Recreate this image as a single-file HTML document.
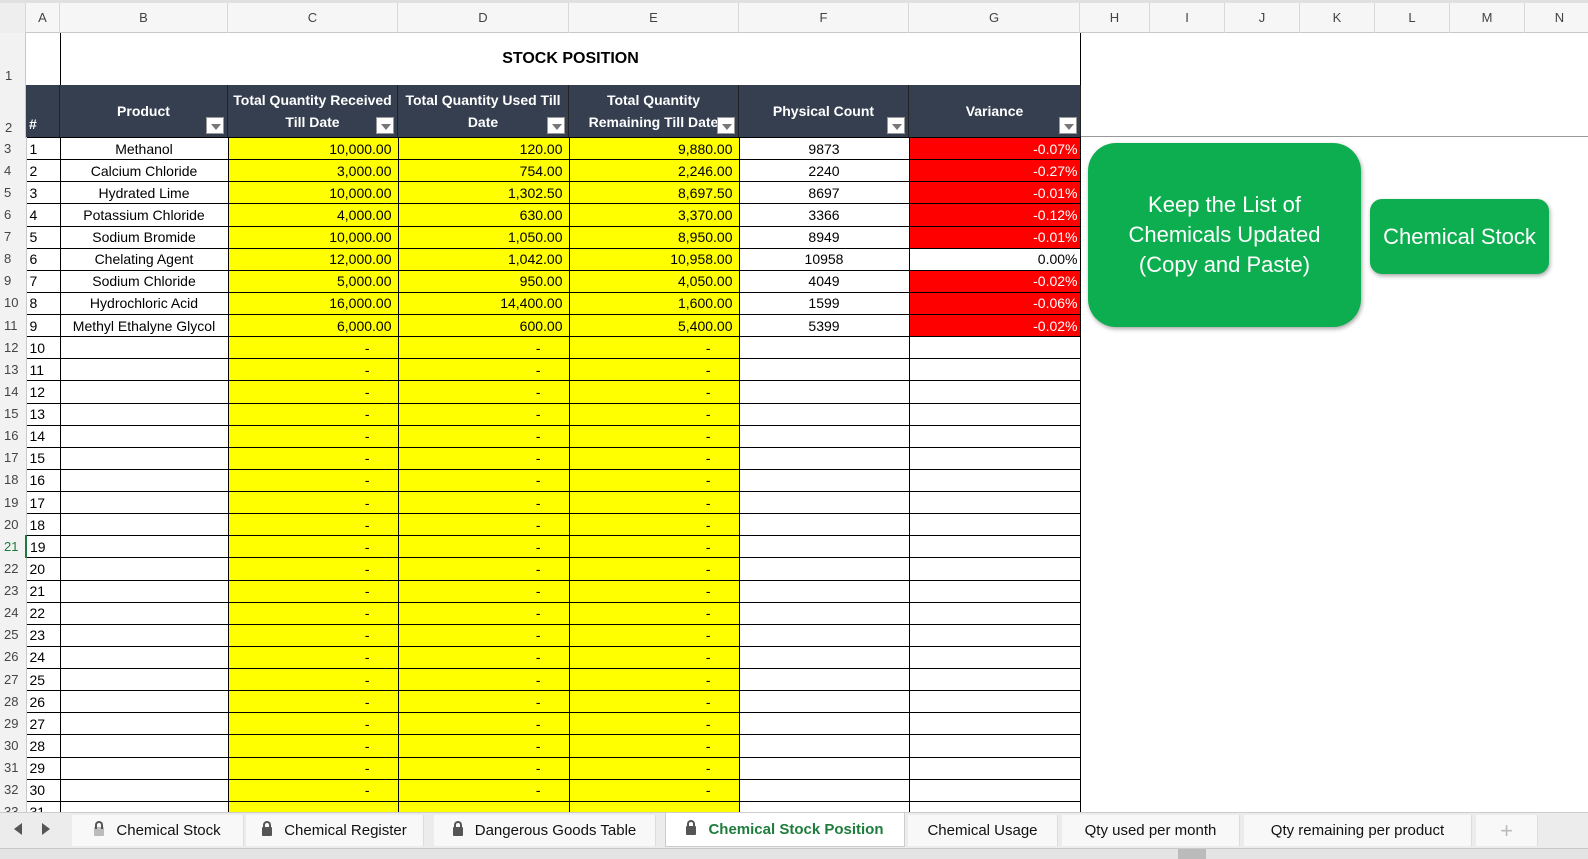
<!DOCTYPE html>
<html><head><meta charset="utf-8"><style>
*{margin:0;padding:0;box-sizing:border-box}
body{width:1588px;height:859px;overflow:hidden;background:#fff;font-family:"Liberation Sans",sans-serif;position:relative;color:#000}
.ch{position:absolute;top:0;height:33px;background:#f6f6f6;border-bottom:1px solid #c8c8c8;border-top:3px solid #e0e0e0}
.ch div{position:absolute;top:0;height:30px;line-height:30px;text-align:center;font-size:13px;color:#444;border-right:1px solid #d8d8d8}
.rn{position:absolute;left:0;top:33px;width:26px;height:780px;background:#f2f2f2;border-right:1px solid #c8c8c8}
table{position:absolute;left:0;top:137px;border-collapse:collapse;table-layout:fixed;font-size:14px}
td{height:22.14px;border:1px solid #000;padding:0 6px;white-space:nowrap;overflow:hidden;line-height:20px}
td.n{border:none;color:#444;font-size:13px;padding:0 0 0 4px;background:#f2f2f2;border-right:1px solid #c8c8c8}
td.a{border-left:1px solid #000;padding-left:3px}
.y{background:#ff0;text-align:right}
.d{background:#ff0;text-align:right;padding-right:28px}
.c{text-align:center}
.r{background:#f00;color:#fff;text-align:right;padding-right:2px}
.w{text-align:right;padding-right:2px}
.hd{position:absolute;top:85px;height:52px;background:#353f4f;color:#fff;font-weight:bold;font-size:14px;text-align:center;border-right:1px solid #222;display:flex;align-items:center;justify-content:center;line-height:22px}
.fb{position:absolute;right:3px;bottom:3px;width:18px;height:17px;background:#fff;border:1px solid #999}
.fb:after{content:"";position:absolute;left:4px;top:6px;border-left:5px solid transparent;border-right:5px solid transparent;border-top:6px solid #777}
.btn{position:absolute;background:#0dae4f;color:#fff;text-align:center;box-shadow:1px 2px 4px rgba(0,0,0,.35);font-size:22px;display:flex;align-items:center;justify-content:center}
.tabs{position:absolute;left:0;top:812px;width:1588px;height:36px;background:#ececec;border-top:1px solid #ccc}
.tab{position:absolute;top:2px;height:31px;line-height:31px;background:#f8f8f8;font-size:15px;text-align:center;color:#111;border-right:1px solid #ddd}
.lk{display:inline-block;width:10px;height:9px;background:#555;border-radius:1px;position:relative;margin-right:12px;vertical-align:-1px}
.lk:before{content:"";position:absolute;left:1px;top:-6px;width:4px;height:6px;border:2px solid #555;border-bottom:none;border-radius:4px 4px 0 0}
</style></head><body>
<div class="ch" style="left:0;width:1588px">
<div style="left:0;width:26px;background:#eee"></div>
<div style="left:26px;width:34px">A</div><div style="left:60px;width:168px">B</div><div style="left:228px;width:170px">C</div><div style="left:398px;width:171px">D</div><div style="left:569px;width:170px">E</div><div style="left:739px;width:170px">F</div><div style="left:909px;width:171px">G</div><div style="left:1080px;width:70px">H</div><div style="left:1150px;width:75px">I</div><div style="left:1225px;width:75px">J</div><div style="left:1300px;width:75px">K</div><div style="left:1375px;width:75px">L</div><div style="left:1450px;width:75px">M</div><div style="left:1525px;width:70px">N</div>
</div>
<div class="rn"></div>
<div style="position:absolute;left:5px;top:68px;font-size:13px;color:#444">1</div>
<div style="position:absolute;left:5px;top:120px;font-size:13px;color:#444">2</div>
<div style="position:absolute;left:60px;top:33px;width:1021px;height:52px;border-left:1px solid #000;border-right:1px solid #000;text-align:center;font-weight:bold;font-size:16px;line-height:52px">STOCK POSITION</div>
<div class="hd" style="left:26px;width:34px;justify-content:flex-start;align-items:flex-end;padding:0 0 2px 3px">#</div>
<div class="hd" style="left:60px;width:168px">Product<span class="fb"></span></div>
<div class="hd" style="left:228px;width:170px">Total Quantity Received<br>Till Date<span class="fb"></span></div>
<div class="hd" style="left:398px;width:171px">Total Quantity Used Till<br>Date<span class="fb"></span></div>
<div class="hd" style="left:569px;width:170px">Total Quantity<br>Remaining Till Date<span class="fb"></span></div>
<div class="hd" style="left:739px;width:170px">Physical Count<span class="fb"></span></div>
<div class="hd" style="left:909px;width:172px">Variance<span class="fb"></span></div>
<div style="position:absolute;left:1081px;top:136px;width:507px;height:1px;background:#999"></div>
<table>
<colgroup><col style="width:26px"><col style="width:34px"><col style="width:168px"><col style="width:170px"><col style="width:171px"><col style="width:170px"><col style="width:170px"><col style="width:171px"></colgroup>
<tr><td class="n">3</td><td class="a">1</td><td class="c">Methanol</td><td class="y">10,000.00</td><td class="y">120.00</td><td class="y">9,880.00</td><td class="c">9873</td><td class="r">-0.07%</td></tr>
<tr><td class="n">4</td><td class="a">2</td><td class="c">Calcium Chloride</td><td class="y">3,000.00</td><td class="y">754.00</td><td class="y">2,246.00</td><td class="c">2240</td><td class="r">-0.27%</td></tr>
<tr><td class="n">5</td><td class="a">3</td><td class="c">Hydrated Lime</td><td class="y">10,000.00</td><td class="y">1,302.50</td><td class="y">8,697.50</td><td class="c">8697</td><td class="r">-0.01%</td></tr>
<tr><td class="n">6</td><td class="a">4</td><td class="c">Potassium Chloride</td><td class="y">4,000.00</td><td class="y">630.00</td><td class="y">3,370.00</td><td class="c">3366</td><td class="r">-0.12%</td></tr>
<tr><td class="n">7</td><td class="a">5</td><td class="c">Sodium Bromide</td><td class="y">10,000.00</td><td class="y">1,050.00</td><td class="y">8,950.00</td><td class="c">8949</td><td class="r">-0.01%</td></tr>
<tr><td class="n">8</td><td class="a">6</td><td class="c">Chelating Agent</td><td class="y">12,000.00</td><td class="y">1,042.00</td><td class="y">10,958.00</td><td class="c">10958</td><td class="w">0.00%</td></tr>
<tr><td class="n">9</td><td class="a">7</td><td class="c">Sodium Chloride</td><td class="y">5,000.00</td><td class="y">950.00</td><td class="y">4,050.00</td><td class="c">4049</td><td class="r">-0.02%</td></tr>
<tr><td class="n">10</td><td class="a">8</td><td class="c">Hydrochloric Acid</td><td class="y">16,000.00</td><td class="y">14,400.00</td><td class="y">1,600.00</td><td class="c">1599</td><td class="r">-0.06%</td></tr>
<tr><td class="n">11</td><td class="a">9</td><td class="c">Methyl Ethalyne Glycol</td><td class="y">6,000.00</td><td class="y">600.00</td><td class="y">5,400.00</td><td class="c">5399</td><td class="r">-0.02%</td></tr>
<tr><td class="n">12</td><td class="a">10</td><td></td><td class="d">-</td><td class="d">-</td><td class="d">-</td><td></td><td></td></tr>
<tr><td class="n">13</td><td class="a">11</td><td></td><td class="d">-</td><td class="d">-</td><td class="d">-</td><td></td><td></td></tr>
<tr><td class="n">14</td><td class="a">12</td><td></td><td class="d">-</td><td class="d">-</td><td class="d">-</td><td></td><td></td></tr>
<tr><td class="n">15</td><td class="a">13</td><td></td><td class="d">-</td><td class="d">-</td><td class="d">-</td><td></td><td></td></tr>
<tr><td class="n">16</td><td class="a">14</td><td></td><td class="d">-</td><td class="d">-</td><td class="d">-</td><td></td><td></td></tr>
<tr><td class="n">17</td><td class="a">15</td><td></td><td class="d">-</td><td class="d">-</td><td class="d">-</td><td></td><td></td></tr>
<tr><td class="n">18</td><td class="a">16</td><td></td><td class="d">-</td><td class="d">-</td><td class="d">-</td><td></td><td></td></tr>
<tr><td class="n">19</td><td class="a">17</td><td></td><td class="d">-</td><td class="d">-</td><td class="d">-</td><td></td><td></td></tr>
<tr><td class="n">20</td><td class="a">18</td><td></td><td class="d">-</td><td class="d">-</td><td class="d">-</td><td></td><td></td></tr>
<tr><td class="n" style="color:#1e7a3e">21</td><td class="a" style="border-left:2px solid #1e7a3e">19</td><td></td><td class="d">-</td><td class="d">-</td><td class="d">-</td><td></td><td></td></tr>
<tr><td class="n">22</td><td class="a">20</td><td></td><td class="d">-</td><td class="d">-</td><td class="d">-</td><td></td><td></td></tr>
<tr><td class="n">23</td><td class="a">21</td><td></td><td class="d">-</td><td class="d">-</td><td class="d">-</td><td></td><td></td></tr>
<tr><td class="n">24</td><td class="a">22</td><td></td><td class="d">-</td><td class="d">-</td><td class="d">-</td><td></td><td></td></tr>
<tr><td class="n">25</td><td class="a">23</td><td></td><td class="d">-</td><td class="d">-</td><td class="d">-</td><td></td><td></td></tr>
<tr><td class="n">26</td><td class="a">24</td><td></td><td class="d">-</td><td class="d">-</td><td class="d">-</td><td></td><td></td></tr>
<tr><td class="n">27</td><td class="a">25</td><td></td><td class="d">-</td><td class="d">-</td><td class="d">-</td><td></td><td></td></tr>
<tr><td class="n">28</td><td class="a">26</td><td></td><td class="d">-</td><td class="d">-</td><td class="d">-</td><td></td><td></td></tr>
<tr><td class="n">29</td><td class="a">27</td><td></td><td class="d">-</td><td class="d">-</td><td class="d">-</td><td></td><td></td></tr>
<tr><td class="n">30</td><td class="a">28</td><td></td><td class="d">-</td><td class="d">-</td><td class="d">-</td><td></td><td></td></tr>
<tr><td class="n">31</td><td class="a">29</td><td></td><td class="d">-</td><td class="d">-</td><td class="d">-</td><td></td><td></td></tr>
<tr><td class="n">32</td><td class="a">30</td><td></td><td class="d">-</td><td class="d">-</td><td class="d">-</td><td></td><td></td></tr>
<tr><td class="n">33</td><td class="a">31</td><td></td><td class="d">-</td><td class="d">-</td><td class="d">-</td><td></td><td></td></tr>
</table>
<div class="btn" style="left:1088px;top:143px;width:273px;height:184px;border-radius:28px;line-height:30px">Keep the List of<br>Chemicals Updated<br>(Copy and Paste)</div>
<div class="btn" style="left:1370px;top:199px;width:179px;height:75px;border-radius:12px">Chemical Stock</div>
<div class="tabs">
<div style="position:absolute;left:14px;top:10px;border-right:8px solid #555;border-top:6px solid transparent;border-bottom:6px solid transparent"></div>
<div style="position:absolute;left:42px;top:10px;border-left:8px solid #555;border-top:6px solid transparent;border-bottom:6px solid transparent"></div>
<div class="tab" style="left:72px;width:172px"><span class="lk" style="background:#bbb"></span>Chemical Stock</div>
<div class="tab" style="left:246px;width:178px"><span class="lk"></span>Chemical Register</div>
<div class="tab" style="left:434px;width:222px"><span class="lk"></span>Dangerous Goods Table</div>
<div class="tab" style="left:665px;width:240px;background:#fff;color:#1e7d3c;font-weight:bold;top:0;height:34px;line-height:34px;border:1px solid #ccc;border-top:none"><span class="lk"></span>Chemical Stock Position</div>
<div class="tab" style="left:908px;width:150px">Chemical Usage</div>
<div class="tab" style="left:1062px;width:178px">Qty used per month</div>
<div class="tab" style="left:1244px;width:228px">Qty remaining per product</div>
<div class="tab" style="left:1476px;width:62px;color:#bbb;font-size:22px">+</div>
</div>
<div style="position:absolute;left:0;top:848px;width:1588px;height:11px;background:#e4e4e4;border-top:1px solid #c8c8c8"></div>
<div style="position:absolute;left:1178px;top:849px;width:28px;height:10px;background:#bbb"></div>
</body></html>
